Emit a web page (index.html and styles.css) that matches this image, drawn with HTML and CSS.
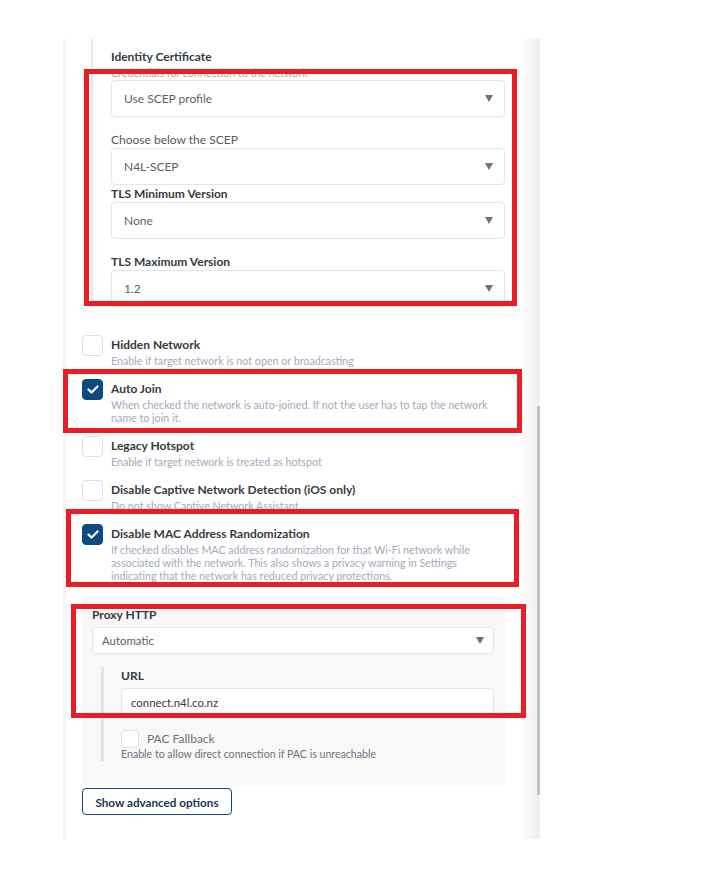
FILE: index.html
```html
<!DOCTYPE html>
<html lang="en">

<head>
  <meta charset="UTF-8" />
  <meta name="viewport" content="width=device-width, initial-scale=1.0" />
  <title>Wi-Fi payload</title>
  <link rel="stylesheet" href="styles.css">
</head>

<body>
  <div class="panel">
    <div class="content">
      <div class="subsection">
        <div class="field-label">Identity Certificate</div>
        <div class="field-help">Credentials for connection to the network</div>
        <div class="select">Use SCEP profile<svg class="caret" width="8" height="7" viewBox="0 0 8 7"><polygon points="0,0 8,0 4,7" /></svg></div>

        <div class="field-plain gap-lg">Choose below the SCEP</div>
        <div class="select">N4L-SCEP<svg class="caret" width="8" height="7" viewBox="0 0 8 7"><polygon points="0,0 8,0 4,7" /></svg></div>

        <div class="field-label short gap-sm">TLS Minimum Version</div>
        <div class="select">None<svg class="caret" width="8" height="7" viewBox="0 0 8 7"><polygon points="0,0 8,0 4,7" /></svg></div>

        <div class="field-label short gap-lg">TLS Maximum Version</div>
        <div class="select">1.2<svg class="caret" width="8" height="7" viewBox="0 0 8 7"><polygon points="0,0 8,0 4,7" /></svg></div>
      </div>

      <div class="checks">
        <div class="check-item">
          <span class="box"></span>
          <div>
            <div class="check-label">Hidden Network</div>
            <div class="check-help">Enable if target network is not open or broadcasting</div>
          </div>
        </div>
        <div class="check-item">
          <span class="box checked"><svg width="12" height="9" viewBox="0 0 12 9"><path d="M1.5 4.5 L4.5 7.5 L10.5 1.5" /></svg></span>
          <div>
            <div class="check-label">Auto Join</div>
            <div class="check-help">When checked the network is auto-joined. If not the user has to tap the network name to join it.</div>
          </div>
        </div>
        <div class="check-item">
          <span class="box"></span>
          <div>
            <div class="check-label">Legacy Hotspot</div>
            <div class="check-help">Enable if target network is treated as hotspot</div>
          </div>
        </div>
        <div class="check-item">
          <span class="box"></span>
          <div>
            <div class="check-label">Disable Captive Network Detection (iOS only)</div>
            <div class="check-help">Do not show Captive Network Assistant</div>
          </div>
        </div>
        <div class="check-item">
          <span class="box checked"><svg width="12" height="9" viewBox="0 0 12 9"><path d="M1.5 4.5 L4.5 7.5 L10.5 1.5" /></svg></span>
          <div>
            <div class="check-label">Disable MAC Address Randomization</div>
            <div class="check-help">If checked disables MAC address randomization for that Wi-Fi network while associated with the network. This also shows a privacy warning in Settings indicating that the network has reduced privacy protections.</div>
          </div>
        </div>
      </div>

      <div class="proxy">
        <div class="field-label">Proxy HTTP</div>
        <div class="select small">Automatic<svg class="caret" width="8" height="7" viewBox="0 0 8 7"><polygon points="0,0 8,0 4,7" /></svg></div>

        <div class="proxy-sub">
          <div class="field-label">URL</div>
          <div class="input">connect.n4l.co.nz</div>
          <div class="pac-row">
            <span class="box small"></span>
            <span class="pac-label">PAC Fallback</span>
          </div>
          <div class="pac-help">Enable to allow direct connection if PAC is unreachable</div>
        </div>
      </div>

      <button class="btn-outline">Show advanced options</button>
    </div>
    <div class="gutter"></div>
    <div class="scrollbar">
      <div class="thumb"></div>
    </div>
  </div>

  <div class="mark mark-identity"></div>
  <div class="mark mark-autojoin"></div>
  <div class="mark mark-mac"></div>
  <div class="mark mark-proxy"></div>
</body>

</html>
```

FILE: styles.css
```css
body {
  margin: 0;
  background: #fff;
  font-family: Lato, "Open Sans", sans-serif;
  color: #363a3e;
}

.panel {
  display: flex;
  width: 477px;
  height: 800px;
  margin: 39px 0 0 63px;
}

.content {
  box-sizing: border-box;
  width: 457px;
  border-left: 3px solid #f4f5f6;
  padding: 0 15px 0 16px;
  overflow: hidden;
}

.gutter {
  width: 15px;
  background: linear-gradient(to right, #fff, #f3f3f3);
}

.scrollbar {
  width: 5px;
  background: #f0f0f0;
}

.thumb {
  width: 3px;
  height: 389px;
  margin: 367px 0 0 2px;
  background: #c1c1c1;
}

/* identity certificate block */
.subsection {
  margin-left: 9px;
  border-left: 2px solid #e4e7ea;
  padding: 9px 0 0 18px;
}

.field-label {
  font-size: 12px;
  font-weight: 700;
  line-height: 18px;
  color: #363a3e;
}

.field-label.short {
  line-height: 16px;
}

.field-plain {
  font-size: 12px;
  line-height: 16px;
  color: #555a60;
}

.gap-lg {
  margin-top: 15px;
}

.gap-sm {
  margin-top: 1px;
}

.field-help {
  font-size: 10.7px;
  line-height: 13px;
  color: #a4a9b8;
  margin-bottom: 1px;
}

.select {
  box-sizing: border-box;
  height: 37px;
  display: flex;
  align-items: center;
  justify-content: space-between;
  padding: 0 11px 0 12px;
  border: 1px solid #e3e6e9;
  border-radius: 4px;
  background: #fff;
  font-size: 12px;
  color: #5b5f64;
}

.select.small {
  height: 27px;
  margin-top: 3px;
  padding: 0 9px 0 9px;
  font-size: 11.4px;
}

.caret {
  fill: #6c737b;
}

/* checkbox list */
.checks {
  margin-top: 28px;
}

.check-item {
  display: flex;
  gap: 8px;
  margin-bottom: 12px;
}

.check-item:last-child {
  margin-bottom: 14px;
}

.box {
  box-sizing: border-box;
  flex: none;
  width: 21px;
  height: 21px;
  border: 1px solid #dcdfe3;
  border-radius: 4px;
  background: #fff;
}

.box.checked {
  display: flex;
  align-items: center;
  justify-content: center;
  background: #0f4a7e;
  border-color: #0f4a7e;
}

.box.checked path {
  fill: none;
  stroke: #fff;
  stroke-width: 2.2;
  stroke-linecap: round;
  stroke-linejoin: round;
}

.box.small {
  width: 18px;
  height: 18px;
}

.check-label {
  padding-top: 1px;
  font-size: 12px;
  font-weight: 700;
  line-height: 18px;
  color: #363a3e;
}

.check-help {
  font-size: 10.7px;
  line-height: 13px;
  color: #a4a9b8;
}

/* proxy block */
.proxy {
  padding: 10px 11px 25px 10px;
  border-radius: 6px;
  background: #f8f8f8;
}

.proxy-sub {
  margin: 13px 0 0 9px;
  border-left: 3px solid #e1e4e7;
  padding-left: 17px;
}

.input {
  box-sizing: border-box;
  height: 28px;
  margin-top: 3px;
  display: flex;
  align-items: center;
  padding-left: 9px;
  border: 1px solid #e3e6e9;
  border-radius: 4px;
  background: #fff;
  font-size: 11.4px;
  color: #363a3e;
}

.pac-row {
  display: flex;
  align-items: center;
  gap: 8px;
  margin-top: 14px;
}

.pac-label {
  font-size: 12px;
  line-height: 18px;
  color: #6b7076;
}

.pac-help {
  font-size: 10.6px;
  line-height: 13px;
  color: #6f7378;
}

.btn-outline {
  box-sizing: border-box;
  width: 150px;
  height: 27px;
  margin-top: 2px;
  padding: 0;
  border: 1px solid #12497c;
  border-radius: 4px;
  background: #fff;
  font-family: Lato, "Open Sans", sans-serif;
  font-size: 11.7px;
  font-weight: 700;
  color: #1d3550;
}

/* red annotation frames drawn over the screenshot */
.mark {
  position: absolute;
  box-sizing: border-box;
  border: 5px solid #ec1c24;
}

.mark-identity {
  left: 84px;
  top: 69px;
  width: 433px;
  height: 237px;
}

.mark-autojoin {
  left: 63px;
  top: 369px;
  width: 459px;
  height: 64px;
}

.mark-mac {
  left: 66px;
  top: 509px;
  width: 453px;
  height: 78px;
}

.mark-proxy {
  left: 71px;
  top: 604px;
  width: 455px;
  height: 114px;
}
```
